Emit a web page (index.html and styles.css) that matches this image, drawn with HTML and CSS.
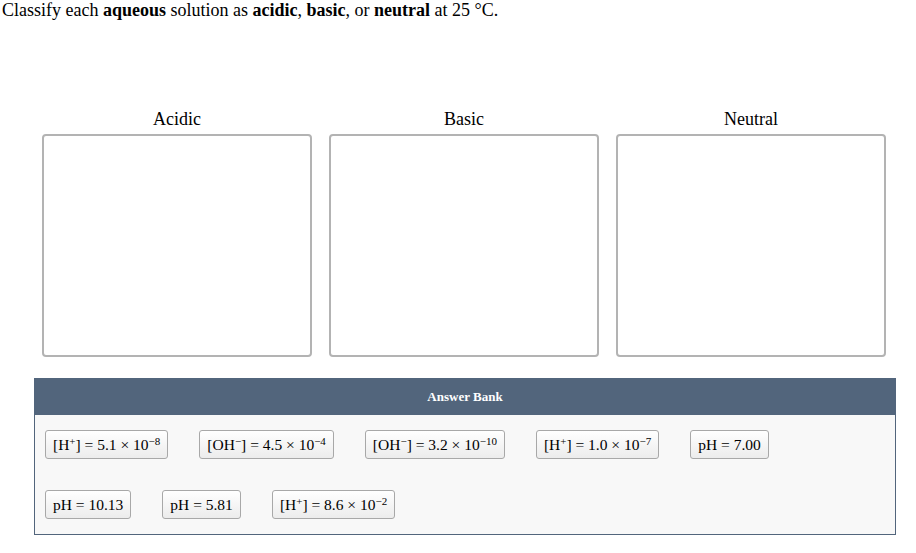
FILE: index.html
```html
<!DOCTYPE html>
<html lang="en">
<head>
    <meta charset="UTF-8">
    <title>Classify aqueous solutions</title>
    <link rel="stylesheet" href="styles.css">
</head>
<body>
    <p class="prompt">Classify each <b>aqueous</b> solution as <b>acidic</b>, <b>basic</b>, or <b>neutral</b> at 25 °C.</p>

    <div class="bins">
        <div class="bin">
            <div class="bin-label">Acidic</div>
            <div class="drop"></div>
        </div>
        <div class="bin">
            <div class="bin-label">Basic</div>
            <div class="drop"></div>
        </div>
        <div class="bin">
            <div class="bin-label">Neutral</div>
            <div class="drop"></div>
        </div>
    </div>

    <div class="bank">
        <div class="bank-title">Answer Bank</div>
        <div class="bank-items">
            <span class="chip">[H<sup>+</sup>] = 5.1 × 10<sup>−8</sup></span>
            <span class="chip">[OH<sup>−</sup>] = 4.5 × 10<sup>−4</sup></span>
            <span class="chip">[OH<sup>−</sup>] = 3.2 × 10<sup>−10</sup></span>
            <span class="chip">[H<sup>+</sup>] = 1.0 × 10<sup>−7</sup></span>
            <span class="chip">pH = 7.00</span>
            <span class="chip">pH = 10.13</span>
            <span class="chip">pH = 5.81</span>
            <span class="chip">[H<sup>+</sup>] = 8.6 × 10<sup>−2</sup></span>
        </div>
    </div>
</body>
</html>
```

FILE: styles.css
```css
body {
    margin: 0;
    font-family: "Liberation Serif", "Times New Roman", serif;
    color: #000;
    background: #fff;
}

.prompt {
    margin: 0;
    padding: 0 2px;
    font-size: 18px;
    line-height: 20px;
}

.bins {
    display: flex;
    gap: 17px;
    margin: 89px 0 0 42px;
    width: 844px;
}

.bin {
    flex: 1;
}

.bin-label {
    text-align: center;
    font-size: 18px;
    line-height: 20px;
    margin-bottom: 5px;
}

.drop {
    height: 219px;
    border: 2px solid #b3b3b3;
    border-radius: 4px;
    background: #fff;
}

.bank {
    margin: 21px 0 0 34px;
    width: 860px;
    border: 1px solid #52657c;
    background: #f8f8f8;
}

.bank-title {
    background: #52657c;
    color: #fff;
    font-weight: bold;
    font-size: 13px;
    line-height: 36px;
    text-align: center;
}

.bank-items {
    display: flex;
    flex-wrap: wrap;
    column-gap: 31px;
    row-gap: 31px;
    padding: 15px 10px 15px 10px;
}

.chip {
    display: inline-block;
    height: 27px;
    line-height: 27px;
    padding: 0 7px;
    border: 1px solid #a8a8a8;
    border-radius: 3px;
    background: linear-gradient(#fff, #ececec);
    font-size: 15.5px;
    white-space: nowrap;
}

.chip sup {
    font-size: 11px;
    line-height: 0;
    vertical-align: 5px;
}
```
